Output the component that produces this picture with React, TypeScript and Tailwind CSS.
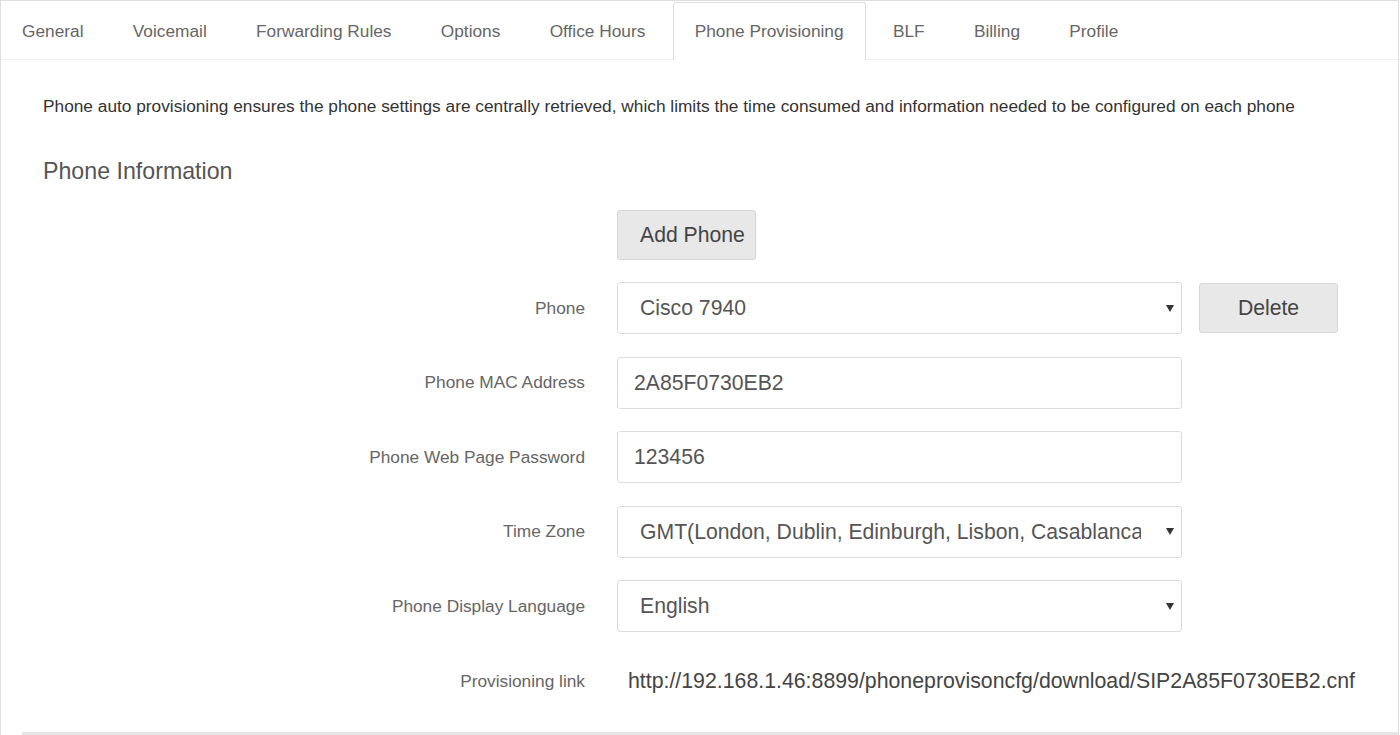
import React from "react";

const tabs = [
  "General",
  "Voicemail",
  "Forwarding Rules",
  "Options",
  "Office Hours",
  "Phone Provisioning",
  "BLF",
  "Billing",
  "Profile",
];

function Arrow() {
  return (
    <svg width="8" height="7" viewBox="0 0 8 7" className="shrink-0">
      <polygon points="0,0 8,0 4,7" fill="#333" />
    </svg>
  );
}

function Select({ value }: { value: string }) {
  return (
    <div className="flex h-[52px] w-[565px] items-center rounded-[3px] border border-[#dcdcdc] bg-white pl-[22px]">
      <div className="w-[501px] overflow-hidden whitespace-nowrap text-[21.2px] text-[#555]">{value}</div>
      <div className="ml-[25px]">
        <Arrow />
      </div>
    </div>
  );
}

function Input({ value }: { value: string }) {
  return (
    <div className="flex h-[52px] w-[565px] items-center rounded-[3px] border border-[#dcdcdc] bg-white pl-[16px]">
      <span className="text-[21.2px] text-[#555]">{value}</span>
    </div>
  );
}

function Row({ label, children }: { label: string; children: React.ReactNode }) {
  return (
    <div className="flex items-center">
      <div className="w-[542px] pt-px text-right text-[17.3px] text-[#666]">{label}</div>
      <div className="ml-[32px] flex items-center">{children}</div>
    </div>
  );
}

export default function App() {
  return (
    <div
      className="h-[735px] w-[1400px] overflow-hidden bg-white"
      style={{ fontFamily: '"Liberation Sans", Arial, sans-serif' }}
    >
      <div className="flex h-[735px] w-[1399px] flex-col border-l border-r border-t border-[#dedede]">
        <div className="flex h-[59px] items-end border-b border-[#eeeeee]">
          <div className="-ml-px flex items-end">
            {tabs.map((t) => {
              const active = t === "Phone Provisioning";
              return (
                <div
                  key={t}
                  className={
                    active
                      ? "relative -mb-px mr-[5.3px] flex h-[58px] items-center rounded-t-[3px] border border-b-0 border-[#dedede] bg-white px-[21px] pt-[1px] text-[17.3px] text-[#666]"
                      : "mr-[5.3px] flex h-[58px] items-center px-[22px] pt-[3px] text-[17.3px] text-[#666]"
                  }
                >
                  <span>{t}</span>
                </div>
              );
            })}
          </div>
        </div>
        <div className="flex flex-1 flex-col pl-[42px]">
          <p className="mt-[35px] whitespace-nowrap text-[17.3px] leading-[22px] text-[#333]">
            Phone auto provisioning ensures the phone settings are centrally retrieved, which limits the time consumed and information needed to be configured on each phone
          </p>
          <h2 className="mt-[40px] text-[23.2px] leading-[28px] text-[#555]">Phone Information</h2>
          <div className="ml-[574px] mt-[25px]">
            <button className="h-[50px] w-[139px] rounded-[3px] border border-[#d6d6d6] bg-[#e8e8e8] pl-[22px] text-left text-[21.2px] text-[#444]">
              Add Phone
            </button>
          </div>
          <div className="mt-[22px] flex flex-col gap-[22.5px]">
            <Row label="Phone">
              <Select value="Cisco 7940" />
              <button className="ml-[17px] h-[50px] w-[139px] rounded-[3px] border border-[#d6d6d6] bg-[#e8e8e8] text-[21.2px] text-[#444]">
                Delete
              </button>
            </Row>
            <Row label="Phone MAC Address">
              <Input value="2A85F0730EB2" />
            </Row>
            <Row label="Phone Web Page Password">
              <Input value="123456" />
            </Row>
            <Row label="Time Zone">
              <Select value="GMT(London, Dublin, Edinburgh, Lisbon, Casablanca, Monrovia)" />
            </Row>
            <Row label="Phone Display Language">
              <Select value="English" />
            </Row>
          </div>
          <div className="mt-[24px] flex h-[52px] items-center">
            <div className="w-[542px] text-right text-[17.3px] text-[#666]">Provisioning link</div>
            <div className="ml-[43px] whitespace-nowrap text-[21.3px] text-[#444]">
              http://192.168.1.46:8899/phoneprovisoncfg/download/SIP2A85F0730EB2.cnf
            </div>
          </div>
          <div className="mt-auto ml-[-21px] h-[3px] bg-[#e6e6e6]" />
        </div>
      </div>
    </div>
  );
}
